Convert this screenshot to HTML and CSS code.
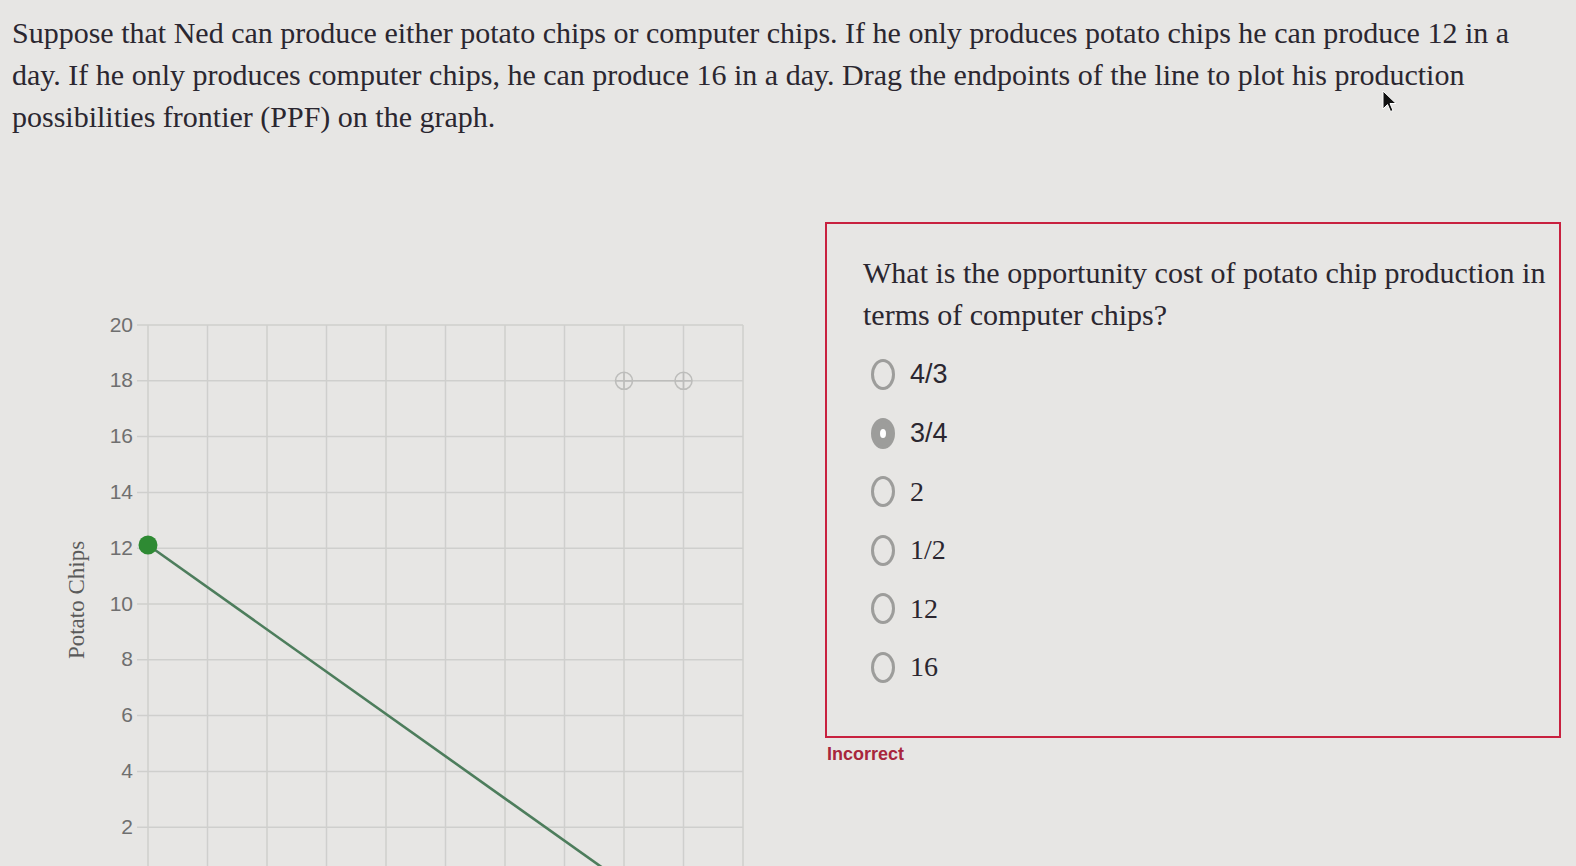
FILE: index.html
```html
<!DOCTYPE html>
<html lang="en">
<head>
    <meta charset="UTF-8">
    <title>PPF Question</title>
    <link rel="stylesheet" href="styles.css">
</head>
<body>
    <!-- Prompt -->
    <p class="prompt">Suppose that Ned can produce either potato chips or computer chips. If he only produces potato chips he can produce 12 in a day. If he only produces computer chips, he can produce 16 in a day. Drag the endpoints of the line to plot his production possibilities frontier (PPF) on the graph.</p>

    <div class="work">
        <!-- Graph -->
        <div class="graph">
            <svg width="825" height="710" viewBox="0 160 825 710">
                <g class="grid">
                    <line x1="148" y1="325" x2="148" y2="883"/>
                    <line x1="207.5" y1="325" x2="207.5" y2="883"/>
                    <line x1="267" y1="325" x2="267" y2="883"/>
                    <line x1="326.5" y1="325" x2="326.5" y2="883"/>
                    <line x1="386" y1="325" x2="386" y2="883"/>
                    <line x1="445.5" y1="325" x2="445.5" y2="883"/>
                    <line x1="505" y1="325" x2="505" y2="883"/>
                    <line x1="564.5" y1="325" x2="564.5" y2="883"/>
                    <line x1="624" y1="325" x2="624" y2="883"/>
                    <line x1="683.5" y1="325" x2="683.5" y2="883"/>
                    <line x1="743" y1="325" x2="743" y2="883"/>

                    <line x1="137" y1="325" x2="743" y2="325"/>
                    <line x1="137" y1="380.8" x2="743" y2="380.8"/>
                    <line x1="137" y1="436.6" x2="743" y2="436.6"/>
                    <line x1="137" y1="492.4" x2="743" y2="492.4"/>
                    <line x1="137" y1="548.2" x2="743" y2="548.2"/>
                    <line x1="137" y1="604" x2="743" y2="604"/>
                    <line x1="137" y1="659.8" x2="743" y2="659.8"/>
                    <line x1="137" y1="715.6" x2="743" y2="715.6"/>
                    <line x1="137" y1="771.4" x2="743" y2="771.4"/>
                    <line x1="137" y1="827.2" x2="743" y2="827.2"/>
                </g>
                <g class="ticks">
                    <text x="133" y="324">20</text>
                    <text x="133" y="379.8">18</text>
                    <text x="133" y="435.6">16</text>
                    <text x="133" y="491.4">14</text>
                    <text x="133" y="547.2">12</text>
                    <text x="133" y="603">10</text>
                    <text x="133" y="658.8">8</text>
                    <text x="133" y="714.6">6</text>
                    <text x="133" y="770.4">4</text>
                    <text x="133" y="826.2">2</text>
                </g>
                <text class="axis-label" transform="translate(84 600) rotate(-90)">Potato Chips</text>

                <!-- unused line tool -->
                <g class="spare">
                    <line x1="624" y1="380.8" x2="683.5" y2="380.8"/>
                    <circle cx="624" cy="380.8" r="8.5"/>
                    <circle cx="683.5" cy="380.8" r="8.5"/>
                    <line x1="615.5" y1="380.8" x2="632.5" y2="380.8"/>
                    <line x1="624" y1="372.3" x2="624" y2="389.3"/>
                    <line x1="675" y1="380.8" x2="692" y2="380.8"/>
                    <line x1="683.5" y1="372.3" x2="683.5" y2="389.3"/>
                </g>

                <!-- PPF line -->
                <line class="ppf" x1="148" y1="545" x2="624" y2="883"/>
                <circle class="ppf-dot" cx="148" cy="545" r="9.5"/>
            </svg>
        </div>

        <!-- Question -->
        <div class="side">
            <div class="question-box">
                <p class="question">What is the opportunity cost of potato chip production in terms of computer chips?</p>
                <div class="choices">
                    <label class="choice"><span class="radio"></span><span class="sans">4/3</span></label>
                    <label class="choice"><span class="radio checked"></span><span class="sans">3/4</span></label>
                    <label class="choice"><span class="radio"></span><span>2</span></label>
                    <label class="choice"><span class="radio"></span><span>1/2</span></label>
                    <label class="choice"><span class="radio"></span><span>12</span></label>
                    <label class="choice"><span class="radio"></span><span>16</span></label>
                </div>
            </div>
            <div class="feedback">Incorrect</div>
        </div>
    </div>

    <svg class="cursor" width="16" height="24" viewBox="0 0 16 24">
        <path d="M1 1 L1 19 L5.5 14.5 L8.5 21.5 L11 20.5 L8 13.5 L14 13.5 Z" fill="#111" stroke="#fff" stroke-width="1"/>
    </svg>
</body>
</html>
```

FILE: styles.css
```css
/* Page */
body {
    margin: 0;
    background-color: #e7e6e4;
    color: #2b2730;
    font-family: "Liberation Serif", "Times New Roman", serif;
    overflow: hidden;
    position: relative;
    height: 866px;
}
.prompt {
    margin: 0;
    padding: 12px 0 0 12px;
    width: 1545px;
    font-size: 30px;
    line-height: 42px;
}

/* Layout */
.work {
    display: flex;
    margin-top: 22px;
}
.graph {
    width: 825px;
    flex: none;
}
.graph svg {
    display: block;
}

/* Graph */
.grid line {
    stroke: #cfcfcd;
    stroke-width: 1.5;
}
.ticks text {
    font-family: "Liberation Sans", Arial, sans-serif;
    font-size: 21px;
    fill: #6f6f6f;
    text-anchor: end;
    dominant-baseline: central;
}
.axis-label {
    font-family: "Liberation Serif", serif;
    font-size: 23px;
    fill: #5a5a5a;
    text-anchor: middle;
}
.spare line,
.spare circle {
    stroke: #bdbdbb;
    stroke-width: 1.6;
    fill: none;
}
.ppf {
    stroke: #4d7d5c;
    stroke-width: 2.6;
}
.ppf-dot {
    fill: #2e8a33;
}

/* Question */
.side {
    padding-top: 62px;
}
.question-box {
    width: 736px;
    height: 516px;
    border: 2px solid #c8213f;
    padding: 28px 4px 0 36px;
    box-sizing: border-box;
}
.question {
    margin: 0;
    font-size: 30px;
    line-height: 42px;
}
.choices {
    margin: 23px 0 0 8px;
    display: flex;
    flex-direction: column;
    gap: 27.5px;
}
.choice {
    display: flex;
    align-items: center;
    gap: 15px;
    height: 31px;
    font-size: 28px;
}
.choice .sans {
    font-family: "Liberation Sans", Arial, sans-serif;
    font-size: 27px;
}
.radio {
    width: 24px;
    height: 31px;
    box-sizing: border-box;
    border: 3px solid #9d9d9b;
    border-radius: 50%;
    position: relative;
}
.radio.checked {
    background-color: #9d9d9b;
}
.radio.checked::after {
    content: "";
    position: absolute;
    left: 6px;
    top: 8px;
    width: 6px;
    height: 9px;
    border-radius: 50%;
    background-color: #fff;
}
.feedback {
    margin-top: 6px;
    padding-left: 2px;
    font-family: "Liberation Sans", Arial, sans-serif;
    font-size: 18px;
    font-weight: bold;
    color: #a8263d;
}

/* Mouse pointer in the shot */
.cursor {
    position: absolute;
    left: 1382px;
    top: 90px;
}
```
